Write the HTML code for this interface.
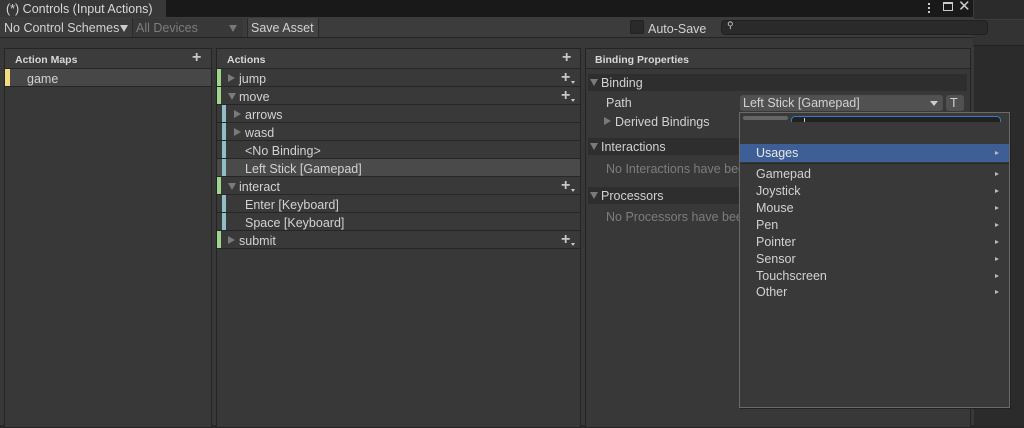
<!DOCTYPE html>
<html><head><style>
*{margin:0;padding:0;box-sizing:border-box}
body{width:1024px;height:425px;background:#282828;font-family:"Liberation Sans",sans-serif;font-size:12.5px;color:#d2d2d2;position:relative;overflow:hidden}
.a{position:absolute}
.t{position:absolute;white-space:nowrap;line-height:18px}
.row{position:absolute;height:18px;border-bottom:1px solid #262626;background:#393939}
.row .t{top:1px!important}
.bar{position:absolute;left:0;top:0;width:4px;height:17px}
.tri{position:absolute;width:0;height:0}
.tr{border-left:7px solid #7a7a7a;border-top:4.5px solid transparent;border-bottom:4.5px solid transparent}
.td{border-top:7px solid #7a7a7a;border-left:4.5px solid transparent;border-right:4.5px solid transparent}
.plus{position:absolute;font-size:16px;line-height:16px;color:#c8c8c8;font-weight:bold}
.plus::after{content:"";position:absolute;left:10px;top:11px;border-top:3px solid #c8c8c8;border-left:2px solid transparent;border-right:2px solid transparent}
.np::after{display:none}
.mi{position:absolute;left:16px;line-height:17px;color:#d2d2d2}
.ar{position:absolute;right:10px;width:0;height:0;border-left:4px solid #bbb;border-top:2.5px solid transparent;border-bottom:2.5px solid transparent}
</style></head><body>
<div class="a" style="left:0;top:0;width:973px;height:17px;background:#191919"></div>
<div class="a" style="left:0;top:0;width:166px;height:18px;background:#383838"></div>
<div class="t" style="left:6px;top:0;line-height:18px;color:#d8d8d8">(*) Controls (Input Actions)</div>
<div class="a" style="left:928px;top:3px;width:2px;height:2px;background:#ccc;box-shadow:0 4px 0 #ccc,0 8px 0 #ccc"></div>
<div class="a" style="left:943px;top:2px;width:10px;height:9px;border:1px solid #ccc;border-top:2px solid #ccc"></div>
<div class="t" style="left:958px;top:-2px;font-size:15px;color:#ccc">✕</div>
<div class="a" style="left:973px;top:0;width:51px;height:425px;background:#2b2b2b;border-left:1px solid #3a3a3a"></div>
<div class="a" style="left:973px;top:19px;width:51px;height:27px;background:#333;border-top:1px solid #3d3d3d;border-bottom:1px solid #222"></div>
<div class="a" style="left:0;top:17px;width:973px;height:21px;background:#3c3c3c;border-bottom:1px solid #232323"></div>
<div class="t" style="left:4px;top:19px">No Control Schemes</div>
<div class="tri td" style="left:120px;top:25px;border-top-color:#ccc"></div>
<div class="a" style="left:132px;top:18px;width:111px;height:19px;background:#383838;border-left:1px solid #2a2a2a"></div>
<div class="t" style="left:136px;top:19px;color:#7d7d7d">All Devices</div>
<div class="tri td" style="left:229px;top:25px;border-top-color:#777"></div>
<div class="a" style="left:247px;top:18px;width:72px;height:19px;background:#444;border-left:1px solid #2a2a2a;border-right:1px solid #2a2a2a"></div>
<div class="t" style="left:251px;top:19px">Save Asset</div>
<div class="a" style="left:630px;top:20px;width:14px;height:14px;background:#2a2a2a;border:1px solid #222;border-radius:2px"></div>
<div class="t" style="left:648px;top:20px">Auto-Save</div>
<div class="a" style="left:721px;top:20px;width:267px;height:15px;background:#2a2a2a;border:1px solid #202020;border-radius:4px"></div>
<div class="t" style="left:727px;top:16px;font-size:9px;color:#ccc">⚲</div>
<div class="a" style="left:0;top:38px;width:973px;height:387px;background:#383838"></div>
<div class="a" style="left:4px;top:48px;width:208px;height:380px;background:#383838;border:1px solid #242424"></div>
<div class="a" style="left:216px;top:48px;width:365px;height:380px;background:#383838;border:1px solid #242424"></div>
<div class="a" style="left:585px;top:48px;width:386px;height:380px;background:#383838;border:1px solid #242424"></div>
<div class="a" style="left:5px;top:49px;width:206px;height:20px;background:#3c3c3c;border-bottom:1px solid #262626"></div>
<div class="a" style="left:217px;top:49px;width:363px;height:20px;background:#3c3c3c;border-bottom:1px solid #262626"></div>
<div class="a" style="left:586px;top:49px;width:384px;height:20px;background:#3c3c3c;border-bottom:1px solid #262626"></div>
<div class="t" style="left:15px;top:51px;font-size:10.5px;font-weight:bold;color:#d8d8d8">Action Maps</div>
<div class="t" style="left:227px;top:51px;font-size:10.5px;font-weight:bold;color:#d8d8d8">Actions</div>
<div class="t" style="left:595px;top:51px;font-size:10.5px;font-weight:bold;color:#d8d8d8">Binding Properties</div>
<div class="plus np" style="left:192px;top:50px">+</div>
<div class="plus np" style="left:562px;top:50px">+</div>
<div class="row" style="left:5px;top:69px;width:206px;background:#474747"><div class="bar" style="background:#f5dc82;width:5px"></div><div class="t" style="left:22px;top:0">game</div></div>
<div class="row" style="left:217px;top:69px;width:363px"><div class="bar" style="background:#9fd58c"></div><div class="tri tr" style="left:11px;top:5px"></div><div class="t" style="left:22px;top:0">jump</div><div class="plus" style="left:344px;top:1px">+</div></div>
<div class="row" style="left:217px;top:87px;width:363px"><div class="bar" style="background:#9fd58c"></div><div class="tri td" style="left:11px;top:6px"></div><div class="t" style="left:22px;top:0">move</div><div class="plus" style="left:344px;top:1px">+</div></div>
<div class="row" style="left:217px;top:105px;width:363px"><div class="bar" style="background:#8fbfc4;left:5px"></div><div class="tri tr" style="left:17px;top:5px"></div><div class="t" style="left:28px;top:0">arrows</div></div>
<div class="row" style="left:217px;top:123px;width:363px"><div class="bar" style="background:#8fbfc4;left:5px"></div><div class="tri tr" style="left:17px;top:5px"></div><div class="t" style="left:28px;top:0">wasd</div></div>
<div class="row" style="left:217px;top:141px;width:363px"><div class="bar" style="background:#8fbfc4;left:5px"></div><div class="t" style="left:28px;top:0">&lt;No Binding&gt;</div></div>
<div class="row" style="left:217px;top:159px;width:363px;background:#4a4a4a"><div class="bar" style="background:#8fbfc4;left:5px"></div><div class="t" style="left:28px;top:0">Left Stick [Gamepad]</div></div>
<div class="row" style="left:217px;top:177px;width:363px"><div class="bar" style="background:#9fd58c"></div><div class="tri td" style="left:11px;top:6px"></div><div class="t" style="left:22px;top:0">interact</div><div class="plus" style="left:344px;top:1px">+</div></div>
<div class="row" style="left:217px;top:195px;width:363px"><div class="bar" style="background:#8fbfc4;left:5px"></div><div class="t" style="left:28px;top:0">Enter [Keyboard]</div></div>
<div class="row" style="left:217px;top:213px;width:363px"><div class="bar" style="background:#8fbfc4;left:5px"></div><div class="t" style="left:28px;top:0">Space [Keyboard]</div></div>
<div class="row" style="left:217px;top:231px;width:363px"><div class="bar" style="background:#9fd58c"></div><div class="tri tr" style="left:11px;top:5px"></div><div class="t" style="left:22px;top:0">submit</div><div class="plus" style="left:344px;top:1px">+</div></div>
<div class="a" style="left:588px;top:74px;width:379px;height:17px;background:#2e2e2e"></div>
<div class="tri td" style="left:590px;top:79px"></div>
<div class="t" style="left:601px;top:74px">Binding</div>
<div class="t" style="left:606px;top:94px">Path</div>
<div class="a" style="left:740px;top:95px;width:203px;height:16px;background:#515151;border-radius:3px"></div>
<div class="t" style="left:743px;top:94px">Left Stick [Gamepad]</div>
<div class="tri td" style="left:930px;top:101px;border-top-color:#ccc;border-top-width:5px;border-left-width:4px;border-right-width:4px"></div>
<div class="a" style="left:946px;top:95px;width:18px;height:16px;background:#515151;border-radius:3px"></div>
<div class="t" style="left:950px;top:94px">T</div>
<div class="tri tr" style="left:604px;top:117px"></div>
<div class="t" style="left:615px;top:113px">Derived Bindings</div>
<div class="a" style="left:588px;top:138px;width:379px;height:17px;background:#2e2e2e"></div>
<div class="tri td" style="left:590px;top:143px"></div>
<div class="t" style="left:601px;top:138px">Interactions</div>
<div class="t" style="left:606px;top:160px;color:#7d7d7d">No Interactions have been added.</div>
<div class="a" style="left:588px;top:187px;width:379px;height:17px;background:#2e2e2e"></div>
<div class="tri td" style="left:590px;top:192px"></div>
<div class="t" style="left:601px;top:187px">Processors</div>
<div class="t" style="left:606px;top:208px;color:#7d7d7d">No Processors have been added.</div>
<div class="a" style="left:739px;top:112px;width:271px;height:296px;background:#393939;border:1px solid #6a6a6a;box-shadow:1px 1px 0 #222">
  <div class="a" style="left:3px;top:3px;width:45px;height:4px;background:#666;border-radius:2px"></div>
  <div class="a" style="left:51px;top:3px;width:210px;height:6px;background:#222;border:1px solid #3b78c8;border-bottom:none;border-radius:4px 4px 0 0"></div>
  <div class="a" style="left:64px;top:5px;width:1px;height:4px;background:#ccc"></div>
  <div class="a" style="left:0;top:31px;width:269px;height:18px;background:#3e5e96"></div>
  <div class="mi" style="top:32px;color:#e8e8e8">Usages</div><div class="ar" style="top:38px"></div>
  <div class="a" style="left:0;top:50px;width:269px;height:1px;background:#262626"></div>
  <div class="mi" style="top:53px">Gamepad</div><div class="ar" style="top:59px"></div>
  <div class="mi" style="top:70px">Joystick</div><div class="ar" style="top:76px"></div>
  <div class="mi" style="top:87px">Mouse</div><div class="ar" style="top:93px"></div>
  <div class="mi" style="top:104px">Pen</div><div class="ar" style="top:110px"></div>
  <div class="mi" style="top:121px">Pointer</div><div class="ar" style="top:127px"></div>
  <div class="mi" style="top:138px">Sensor</div><div class="ar" style="top:144px"></div>
  <div class="mi" style="top:155px">Touchscreen</div><div class="ar" style="top:161px"></div>
  <div class="mi" style="top:171px">Other</div><div class="ar" style="top:177px"></div>
</div>
</body></html>
